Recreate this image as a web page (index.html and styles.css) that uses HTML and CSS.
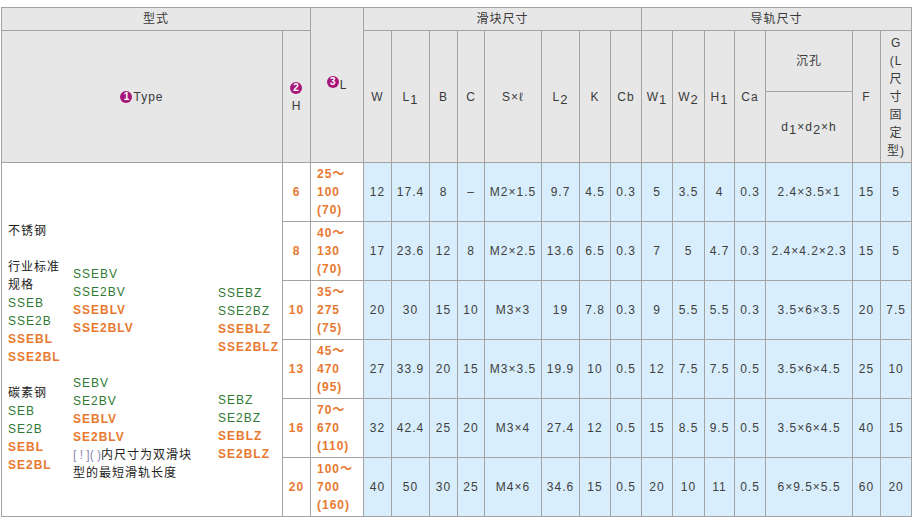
FILE: index.html
```html
<!DOCTYPE html>
<html lang="zh">
<head>
<meta charset="utf-8">
<title>规格表</title>
<link rel="stylesheet" href="styles.css">
</head>
<body>
<table class="spec">
  <colgroup>
    <col class="c-type"><col class="c-h"><col class="c-l">
    <col class="c-w"><col class="c-l1"><col class="c-b"><col class="c-c"><col class="c-s"><col class="c-l2"><col class="c-k"><col class="c-cb">
    <col class="c-w1"><col class="c-w2"><col class="c-h1"><col class="c-ca"><col class="c-d"><col class="c-f"><col class="c-g">
  </colgroup>
  <thead>
    <tr class="hr1">
      <th colspan="2">型式</th>
      <th rowspan="3" class="th-l"><span class="num num-up">3</span>L</th>
      <th colspan="8">滑块尺寸</th>
      <th colspan="7">导轨尺寸</th>
    </tr>
    <tr class="hr2">
      <th rowspan="2"><span class="num">1</span>Type</th>
      <th rowspan="2" class="th-h"><span class="num">2</span><br>H</th>
      <th rowspan="2">W</th>
      <th rowspan="2">L<span class="sb">1</span></th>
      <th rowspan="2">B</th>
      <th rowspan="2">C</th>
      <th rowspan="2">S×ℓ</th>
      <th rowspan="2">L<span class="sb">2</span></th>
      <th rowspan="2">K</th>
      <th rowspan="2">Cb</th>
      <th rowspan="2">W<span class="sb">1</span></th>
      <th rowspan="2">W<span class="sb">2</span></th>
      <th rowspan="2">H<span class="sb">1</span></th>
      <th rowspan="2">Ca</th>
      <th>沉孔</th>
      <th rowspan="2">F</th>
      <th rowspan="2" class="th-g">G<br>(L<br>尺<br>寸<br>固<br>定<br>型)</th>
    </tr>
    <tr class="hr3">
      <th>d<span class="sb">1</span>×d<span class="sb">2</span>×h</th>
    </tr>
  </thead>
  <tbody>
    <tr>
      <td rowspan="6" class="type-cell">
        <div class="type-wrap">
          <div class="grp grp-sus">
            <div class="col col1">
              <div class="zh">不锈钢</div>
              <div class="blank"></div>
              <div class="zh">行业标准<br>规格</div>
              <div class="g">SSEB</div>
              <div class="g">SSE2B</div>
              <div class="o">SSEBL</div>
              <div class="o">SSE2BL</div>
            </div>
            <div class="col col2">
              <div class="g">SSEBV</div>
              <div class="g">SSE2BV</div>
              <div class="o">SSEBLV</div>
              <div class="o">SSE2BLV</div>
            </div>
            <div class="col col3">
              <div class="g">SSEBZ</div>
              <div class="g">SSE2BZ</div>
              <div class="o">SSEBLZ</div>
              <div class="o">SSE2BLZ</div>
            </div>
          </div>
          <div class="grp grp-cs">
            <div class="col col1">
              <div class="zh">碳素钢</div>
              <div class="g">SEB</div>
              <div class="g">SE2B</div>
              <div class="o">SEBL</div>
              <div class="o">SE2BL</div>
            </div>
            <div class="col col2">
              <div class="g">SEBV</div>
              <div class="g">SE2BV</div>
              <div class="o">SEBLV</div>
              <div class="o">SE2BLV</div>
              <div class="note"><span class="mark">[ ! ]( </span><span class="mark">)</span>内尺寸为双滑块<br>型的最短滑轨长度</div>
            </div>
            <div class="col col3">
              <div class="g">SEBZ</div>
              <div class="g">SE2BZ</div>
              <div class="o">SEBLZ</div>
              <div class="o">SE2BLZ</div>
            </div>
          </div>
        </div>
      </td>
      <td class="hv">6</td>
      <td class="lv">25～<br>100<br>(70)</td>
      <td>12</td><td>17.4</td><td>8</td><td>–</td><td>M2×1.5</td><td>9.7</td><td>4.5</td><td>0.3</td>
      <td>5</td><td>3.5</td><td>4</td><td>0.3</td><td>2.4×3.5×1</td><td>15</td><td>5</td>
    </tr>
    <tr>
      <td class="hv">8</td>
      <td class="lv">40～<br>130<br>(70)</td>
      <td>17</td><td>23.6</td><td>12</td><td>8</td><td>M2×2.5</td><td>13.6</td><td>6.5</td><td>0.3</td>
      <td>7</td><td>5</td><td>4.7</td><td>0.3</td><td>2.4×4.2×2.3</td><td>15</td><td>5</td>
    </tr>
    <tr>
      <td class="hv">10</td>
      <td class="lv">35～<br>275<br>(75)</td>
      <td>20</td><td>30</td><td>15</td><td>10</td><td>M3×3</td><td>19</td><td>7.8</td><td>0.3</td>
      <td>9</td><td>5.5</td><td>5.5</td><td>0.3</td><td>3.5×6×3.5</td><td>20</td><td>7.5</td>
    </tr>
    <tr>
      <td class="hv">13</td>
      <td class="lv">45～<br>470<br>(95)</td>
      <td>27</td><td>33.9</td><td>20</td><td>15</td><td>M3×3.5</td><td>19.9</td><td>10</td><td>0.5</td>
      <td>12</td><td>7.5</td><td>7.5</td><td>0.5</td><td>3.5×6×4.5</td><td>25</td><td>10</td>
    </tr>
    <tr>
      <td class="hv">16</td>
      <td class="lv">70～<br>670<br>(110)</td>
      <td>32</td><td>42.4</td><td>25</td><td>20</td><td>M3×4</td><td>27.4</td><td>12</td><td>0.5</td>
      <td>15</td><td>8.5</td><td>9.5</td><td>0.5</td><td>3.5×6×4.5</td><td>40</td><td>15</td>
    </tr>
    <tr>
      <td class="hv">20</td>
      <td class="lv">100～<br>700<br>(160)</td>
      <td>40</td><td>50</td><td>30</td><td>25</td><td>M4×6</td><td>34.6</td><td>15</td><td>0.5</td>
      <td>20</td><td>10</td><td>11</td><td>0.5</td><td>6×9.5×5.5</td><td>60</td><td>20</td>
    </tr>
  </tbody>
</table>
</body>
</html>
```

FILE: styles.css
```css
html, body {
  margin: 0;
  padding: 0;
  background: #ffffff;
}

body {
  font-family: "Liberation Sans", Arial, "Noto Sans CJK SC", sans-serif;
  font-size: 12px;
  letter-spacing: 1px;
  color: #333333;
}

.spec {
  margin: 7px 0 0 1px;
  border-collapse: collapse;
  table-layout: fixed;
  width: 911px;
}

.spec th,
.spec td {
  border: 1px solid #a3a3a3;
  padding: 0;
  text-align: center;
  vertical-align: middle;
  line-height: 18px;
}

.spec th {
  background: #e7e7e7;
  font-weight: normal;
  color: #3a3a3a;
}

.c-type { width: 281px; }
.c-h { width: 28px; }
.c-l { width: 53px; }
.c-w { width: 28px; }
.c-l1 { width: 38px; }
.c-b { width: 28px; }
.c-c { width: 27px; }
.c-s { width: 57px; }
.c-l2 { width: 38px; }
.c-k { width: 31px; }
.c-cb { width: 31px; }
.c-w1 { width: 31px; }
.c-w2 { width: 32px; }
.c-h1 { width: 30px; }
.c-ca { width: 31px; }
.c-d { width: 87px; }
.c-f { width: 28px; }
.c-g { width: 31px; }

.hr1 { height: 23px; }
.hr2 { height: 61px; }
.hr3 { height: 71px; }

.th-h { line-height: 15px; }
.th-g { line-height: 18px; }
.th-l { padding-bottom: 20px; }

.sb {
  font-size: 13px;
  position: relative;
  top: 3px;
}

.num {
  display: inline-block;
  width: 12px;
  height: 12px;
  border-radius: 50%;
  background: #a8167a;
  color: #ffffff;
  font-size: 10px;
  font-weight: bold;
  line-height: 12px;
  letter-spacing: 0;
  text-align: center;
  vertical-align: 1px;
  margin-right: 1px;
}

.num-up { vertical-align: 4px; }

.spec tbody td {
  background: #d8eefc;
  height: 58px;
  color: #404040;
}

.spec tbody td.hv {
  background: #ffffff;
  color: #e8792f;
  font-weight: bold;
}

.spec tbody td.lv {
  background: #ffffff;
  color: #e8792f;
  font-weight: bold;
  text-align: left;
  padding-left: 6px;
}

.spec tbody td.type-cell {
  background: #ffffff;
  text-align: left;
  vertical-align: top;
  padding: 0;
}

.type-wrap {
  height: 352px;
  padding-left: 6px;
}

.grp {
  display: grid;
  grid-template-columns: 65px 145px 1fr;
  align-items: start;
}

.grp-sus { height: 206px; }

.grp-sus .col1 { margin-top: 59px; }
.grp-sus .col2 { margin-top: 102px; }
.grp-sus .col3 { margin-top: 121px; }

.grp-cs .col1 { margin-top: 15px; }
.grp-cs .col2 { margin-top: 5px; }
.grp-cs .col3 { margin-top: 22px; }

.col div { line-height: 18px; }

.blank { height: 18px; }

.zh { color: #222222; font-size: 12px; }

.g { color: #2f7a33; }

.o { color: #e8792f; font-weight: bold; }

.note { color: #222222; }

.mark { color: #8a8ab0; letter-spacing: 0; }
```
